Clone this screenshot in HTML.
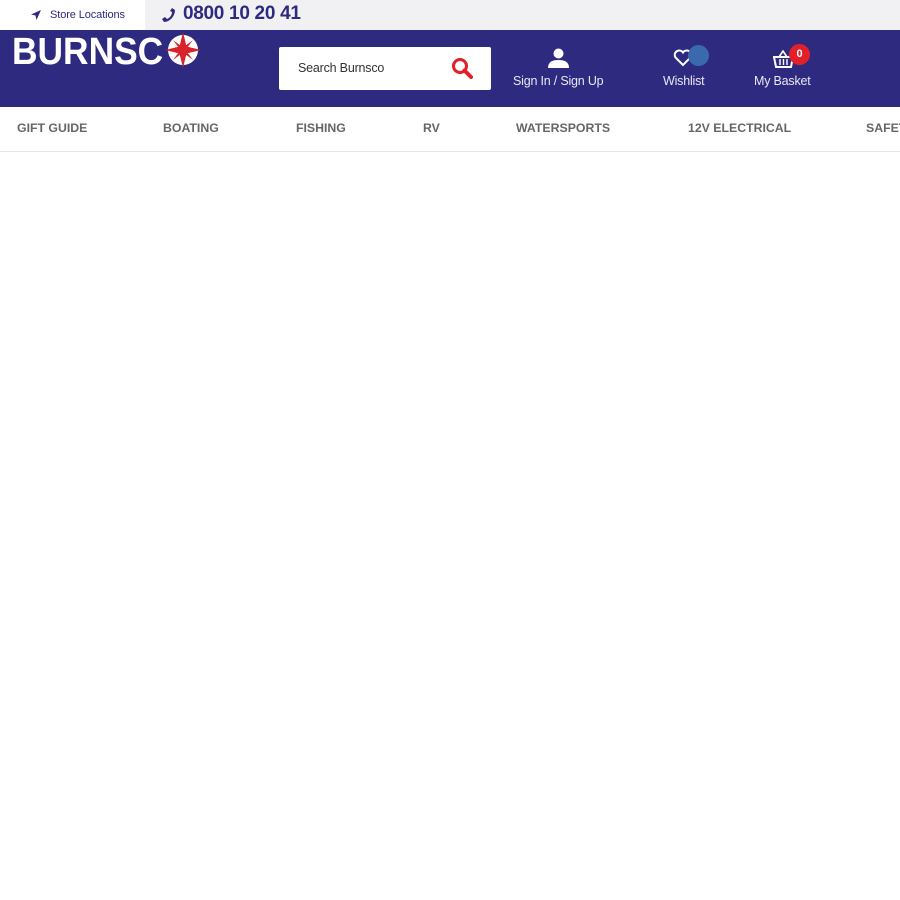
<!DOCTYPE html>
<html><head><meta charset="utf-8"><style>
*{margin:0;padding:0;box-sizing:border-box}
body{width:900px;height:900px;background:#fff;font-family:"Liberation Sans",sans-serif;overflow:hidden;position:relative}
.top{position:absolute;left:0;top:0;width:900px;height:30px;background:#f1f1f3}
.sl{position:absolute;left:0;top:0;width:145px;height:30px;background:#fff;color:#2e2a7f;font-size:11px;line-height:30px;padding-left:50px;letter-spacing:-0.1px}
.ph{position:absolute;left:183px;top:3px;color:#2e2a7f;font-size:19px;font-weight:bold;letter-spacing:-0.3px}
.hd{position:absolute;left:0;top:30px;width:900px;height:77px;background:#2e2a7f}
.logo{position:absolute;left:12px;top:-3px;color:#fff;font-size:38px;line-height:50px;font-weight:bold;letter-spacing:0;transform:scaleX(0.93);transform-origin:left}
.search{position:absolute;left:279px;top:17px;width:212px;height:43px;background:#fff;border-radius:2px;font-size:12.5px;color:#333;line-height:43px;padding-left:19px;letter-spacing:-0.2px}
.lbl{position:absolute;color:#e8e8f4;font-size:12.5px;top:44px;letter-spacing:-0.2px}
.nav{position:absolute;top:107px;left:0;width:900px;height:45px;border-bottom:1px solid #e6e6e6}
.nav span{position:absolute;top:14px;font-size:12.3px;font-weight:bold;color:#666}
</style></head><body>
<div class="top">
<div class="sl"><svg style="position:absolute;left:31px;top:10px" width="10" height="10" viewBox="0 0 10 10"><path d="M10 0L0 4.5 4.5 5.5 5.5 10Z" fill="#2e2a7f"/></svg>Store Locations</div>
<svg style="position:absolute;left:162px;top:8px" width="13" height="14" viewBox="0 0 13 14"><path d="M10 0l3 2c0 6-5 12-11 12L0 11l3-2 2 2c3-1 5-4 5-7L8 3z" fill="#2e2a7f"/></svg>
<div class="ph">0800 10 20 41</div>
</div>
<div class="hd">
<div class="logo">BURNSC</div>
<svg style="position:absolute;left:164px;top:1px" width="38" height="38" viewBox="-19 -19 38 38"><circle r="15" fill="#fff"/><path d="M0-18L3.5-3.5 18 0 3.5 3.5 0 18-3.5 3.5-18 0-3.5-3.5Z" fill="#d8232a"/><path d="M10-10L2.5 0 10 10 0 2.5-10 10-2.5 0-10-10 0-2.5Z" fill="#d8232a"/></svg>
<div class="search">Search Burnsco</div>
<svg style="position:absolute;left:451px;top:27px" width="22" height="22" viewBox="0 0 22 22"><circle cx="9" cy="9" r="6.5" fill="none" stroke="#e3202a" stroke-width="3"/><path d="M13.5 13.5L20 20" stroke="#e3202a" stroke-width="4" stroke-linecap="round"/></svg>
<svg style="position:absolute;left:547px;top:18px" width="23" height="20" viewBox="0 0 23 20"><circle cx="11.5" cy="5.5" r="5" fill="#fff"/><path d="M1 20c0-6 4-8 10.5-8S22 14 22 20z" fill="#fff"/></svg>
<div class="lbl" style="left:513px">Sign In / Sign Up</div>
<svg style="position:absolute;left:673px;top:19px" width="20" height="18" viewBox="0 0 20 18"><path d="M10 16L2.5 8.5a4 4 0 0 1 7.5-5 4 4 0 0 1 7.5 5z" fill="none" stroke="#fff" stroke-width="2"/></svg>
<div style="position:absolute;left:688px;top:15px;width:21px;height:21px;border-radius:50%;background:#3a6aad"></div>
<div class="lbl" style="left:663px">Wishlist</div>
<svg style="position:absolute;left:773px;top:20px" width="21" height="18" viewBox="0 0 21 18"><path d="M6 7l4-6 4 6" fill="none" stroke="#fff" stroke-width="1.6"/><path d="M1 7h19l-2 10H3z" fill="none" stroke="#fff" stroke-width="2"/><path d="M7 9v6M10.5 9v6M14 9v6" stroke="#fff" stroke-width="1.4"/></svg>
<div style="position:absolute;left:789px;top:14px;width:21px;height:21px;border-radius:50%;background:#e3202a;color:#fff;font-size:11px;font-weight:bold;text-align:center;line-height:21px">0</div>
<div class="lbl" style="left:754px">My Basket</div>
</div>
<div class="nav">
<span style="left:17px">GIFT GUIDE</span>
<span style="left:163px">BOATING</span>
<span style="left:296px">FISHING</span>
<span style="left:423px">RV</span>
<span style="left:516px">WATERSPORTS</span>
<span style="left:688px">12V ELECTRICAL</span>
<span style="left:866px">SAFETY</span>
</div>
</body></html>
